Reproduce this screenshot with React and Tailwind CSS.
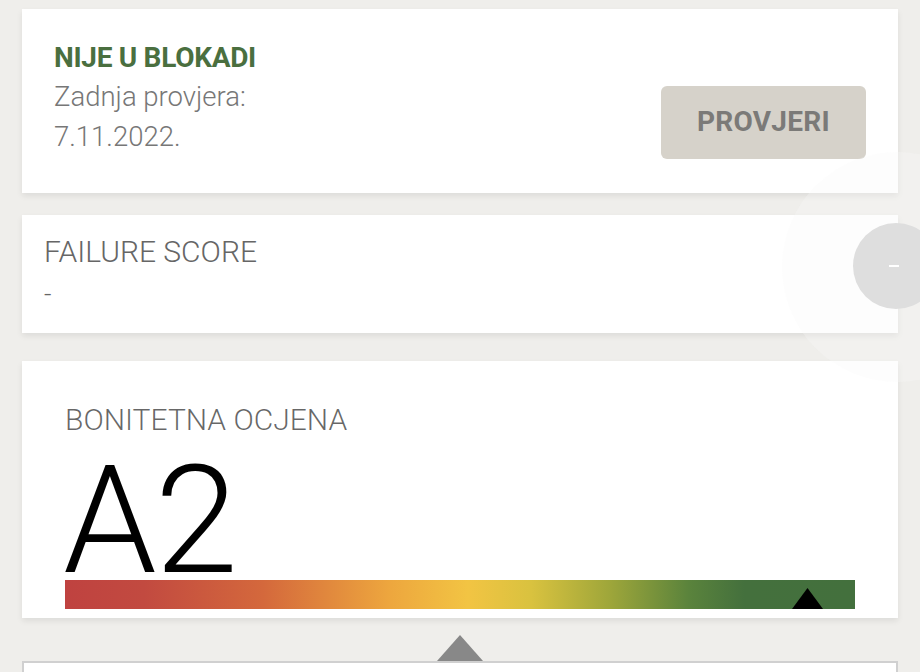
export default function App() {
  return (
    <div className="w-[920px] h-[672px] overflow-hidden bg-[#efeeeb] font-['Roboto',sans-serif] px-[22px] pt-[9px] relative">
      {/* blokada */}
      <div className="bg-white h-[184px] shadow-[0_3px_6px_rgba(0,0,0,0.08)] flex items-center justify-between pl-[32px] pr-[32px]">
        <div className="flex flex-col -mt-[6px]">
          <div className="text-[28px] font-bold text-[#4a6f3f] leading-[38px] tracking-[-0.3px]">NIJE U BLOKADI</div>
          <div className="text-[27.5px] font-light text-[#777] leading-[40px]">Zadnja provjera:</div>
          <div className="text-[27.5px] font-light text-[#777] leading-[40px]">7.11.2022.</div>
        </div>
        <button className="w-[205px] h-[73px] mt-[42px] rounded-[6px] bg-[#d6d2ca] text-[#7b7a78] text-[28px] font-bold tracking-[0.3px]">
          PROVJERI
        </button>
      </div>

      {/* failure score */}
      <div className="bg-white h-[118px] mt-[22px] shadow-[0_3px_6px_rgba(0,0,0,0.08)] pl-[22px] pt-[18px] relative">
        <div className="text-[30px] font-light text-[#666] leading-[38px]">FAILURE SCORE</div>
        <div className="text-[26px] font-light text-[#666] leading-[34px] mt-[6px]">-</div>
      </div>

      {/* bonitetna ocjena */}
      <div className="bg-white h-[257px] mt-[28px] shadow-[0_3px_6px_rgba(0,0,0,0.08)] px-[43px] pt-[40px]">
        <div className="text-[30px] font-light text-black/60 leading-[38px]">BONITETNA OCJENA</div>
        <div className="text-[150px] font-light text-black leading-[120px] mt-[22px] -ml-[2px] tracking-[-2px]">A2</div>
        <div className="relative h-[29px] -mt-[1px] bg-[linear-gradient(to_right,#bf4240_0%,#c24a40_10%,#d4683c_25%,#eda63e_41%,#f2c443_51%,#d9c23f_59%,#9ea63a_69%,#5a833c_79%,#44703d_86%,#43703d_100%)]">
          <svg className="absolute right-[32px] bottom-0" width="31" height="21" viewBox="0 0 31 21">
            <polygon points="15.5,0 31,21 0,21" fill="#000" />
          </svg>
        </div>
      </div>

      {/* bottom panel */}
      <div className="relative mt-[43px]">
        <svg className="absolute left-[415px] -top-[26px]" width="46" height="26" viewBox="0 0 46 26">
          <polygon points="23,0 46,26 0,26" fill="#888" />
        </svg>
        <div className="h-[40px] bg-white border-2 border-[#d0d0d0]"></div>
      </div>

      {/* ripple + circle */}
      <div className="absolute left-[782px] top-[152px] w-[230px] h-[230px] rounded-full bg-[rgba(248,250,250,0.3)] pointer-events-none"></div>
      <div className="absolute left-[853px] top-[223px] w-[86px] h-[86px] rounded-full bg-[#dedede] flex items-center pl-[36px]">
        <div className="w-[10px] h-[2px] bg-white"></div>
      </div>
    </div>
  );
}
